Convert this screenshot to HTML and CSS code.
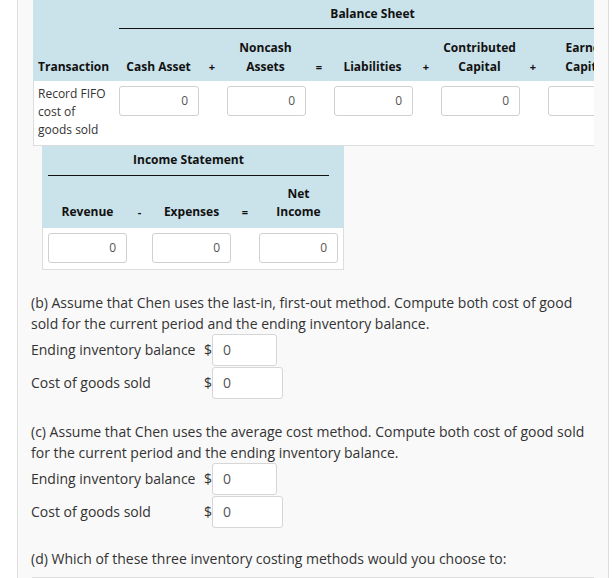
FILE: index.html
```html
<!DOCTYPE html>
<html>
<head>
<meta charset="utf-8">
<link rel="stylesheet" href="styles.css">
</head>
<body>
<div class="page">
  <div class="panel">
    <div class="bs-wrap">
      <div class="bs-grid">
        <div class="h-title bs-title">Balance Sheet</div>
        <div class="h-col txn">Transaction</div>
        <div class="h-col">Cash Asset</div>
        <div class="h-col op">+</div>
        <div class="h-col">Noncash<br>Assets</div>
        <div class="h-col op">=</div>
        <div class="h-col">Liabilities</div>
        <div class="h-col op">+</div>
        <div class="h-col">Contributed<br>Capital</div>
        <div class="h-col op">+</div>
        <div class="h-col">Earned<br>Capital</div>
        <div class="b-row">
          <div class="txn-label">Record FIFO cost of goods sold</div>
          <div class="num">0</div>
          <div></div>
          <div class="num">0</div>
          <div></div>
          <div class="num">0</div>
          <div></div>
          <div class="num">0</div>
          <div></div>
          <div class="num"></div>
        </div>
      </div>
    </div>

    <div class="is-wrap">
      <div class="is-head">
        <div class="is-title">Income Statement</div>
        <div class="is-cols">
          <div class="h-col">Revenue</div>
          <div class="h-col op">-</div>
          <div class="h-col">Expenses</div>
          <div class="h-col op">=</div>
          <div class="h-col">Net<br>Income</div>
        </div>
      </div>
      <div class="is-row">
        <div class="num">0</div>
        <div></div>
        <div class="num">0</div>
        <div></div>
        <div class="num">0</div>
      </div>
    </div>

    <p class="q q-b">(b) Assume that Chen uses the last-in, first-out method. Compute both cost of good sold for the current period and the ending inventory balance.</p>
    <div class="form">
      <div class="f-label">Ending inventory balance</div>
      <div class="f-dollar">$</div>
      <div class="f-input w65">0</div>
      <div class="f-label">Cost of goods sold</div>
      <div class="f-dollar">$</div>
      <div class="f-input w71">0</div>
    </div>

    <p class="q q-c">(c) Assume that Chen uses the average cost method. Compute both cost of good sold for the current period and the ending inventory balance.</p>
    <div class="form">
      <div class="f-label">Ending inventory balance</div>
      <div class="f-dollar">$</div>
      <div class="f-input w65">0</div>
      <div class="f-label">Cost of goods sold</div>
      <div class="f-dollar">$</div>
      <div class="f-input w71">0</div>
    </div>

    <p class="q q-d">(d) Which of these three inventory costing methods would you choose to:</p>
    <div class="next-box"></div>
  </div>
</div>
</body>
</html>
```

FILE: styles.css
```css
html, body {
  margin: 0;
  padding: 0;
  background: #ffffff;
}

body {
  font-family: "Open Sans", "Liberation Sans", sans-serif;
  color: #333333;
  width: 612px;
  height: 578px;
  overflow: hidden;
}

.page {
  display: flex;
  padding-left: 17px;
  height: 578px;
}

.panel {
  width: 563px;
  padding: 0 14px 0 13px;
  background: #f9f9f9;
  border-left: 1px solid #dddddd;
  border-right: 1px solid #dddddd;
  height: 600px;
}

/* Balance sheet */
.bs-wrap {
  margin-left: 2px;
  width: 561px;
  overflow: hidden;
}

.bs-grid {
  display: grid;
  grid-template-columns: 86px 79px 28px 79px 28px 79px 28px 79px 28px 79px;
  width: 593px;
  background: #cae2ea;
}

.h-title {
  font-size: 12px;
  font-weight: 700;
  color: #111111;
  text-align: center;
}

.bs-title {
  grid-column: 2 / 11;
  height: 28px;
  line-height: 27px;
  border-bottom: 1px solid #111111;
}

.h-col {
  font-size: 12px;
  font-weight: 700;
  color: #111111;
  text-align: center;
  line-height: 19px;
  height: 52px;
  box-sizing: border-box;
  padding-bottom: 5px;
  display: flex;
  align-items: flex-end;
  justify-content: center;
}

.h-col.txn {
  justify-content: flex-start;
  padding-left: 5px;
}

.h-col.op {
  font-size: 11px;
}

.b-row {
  grid-column: 1 / 11;
  display: grid;
  grid-template-columns: 86px 79px 28px 79px 28px 79px 28px 79px 28px 79px;
  background: #ffffff;
  border-left: 1px solid #dddddd;
  border-bottom: 1px solid #dddddd;
  height: 64px;
}

.b-row .txn-label {
  font-size: 12px;
  line-height: 18px;
  padding: 4px 12px 0 4px;
  color: #333333;
}

.num {
  height: 30px;
  box-sizing: border-box;
  margin-top: 5px;
  background: #ffffff;
  border: 1px solid #d0d0d0;
  border-radius: 3px;
  font-size: 12px;
  line-height: 28px;
  text-align: right;
  padding-right: 10px;
  color: #555555;
}

.b-row .num:nth-child(2) {
  margin-left: -1px;
}

/* Income statement */
.is-wrap {
  margin-left: 11px;
  width: 302px;
}

.is-head {
  background: #cae2ea;
  padding: 0 6px;
}

.is-title {
  font-size: 12px;
  font-weight: 700;
  color: #111111;
  text-align: center;
  width: 281px;
  height: 29px;
  line-height: 28px;
  border-bottom: 1px solid #111111;
}

.is-cols {
  display: grid;
  grid-template-columns: 79px 25px 79px 28px 79px;
}

.is-cols .h-col {
  height: 52px;
  padding-bottom: 7px;
  line-height: 18px;
}

.is-row {
  display: grid;
  grid-template-columns: 79px 25px 79px 28px 79px;
  background: #ffffff;
  border: 1px solid #dddddd;
  border-top: none;
  padding: 0 5px 6px 5px;
}

/* Questions */
.q {
  font-size: 14px;
  line-height: 21px;
  margin: 0;
  color: #333333;
}

.q-b {
  margin-top: 22px;
}

.q-c {
  margin-top: 22px;
}

.q-d {
  margin-top: 20px;
}

.form {
  display: grid;
  grid-template-columns: 173px 8px max-content;
  row-gap: 1px;
  align-items: center;
  font-size: 14px;
  color: #333333;
}

.f-label,
.f-dollar {
  line-height: 20px;
}

.f-input {
  height: 32px;
  box-sizing: border-box;
  background: #ffffff;
  border: 1px solid #d6d6d6;
  border-radius: 3px;
  padding-left: 10px;
  line-height: 30px;
  color: #555555;
}

.w65 { width: 65px; }
.w71 { width: 71px; }

.next-box {
  margin-top: 8px;
  margin-left: 1px;
  border-top: 1px solid #dddddd;
  height: 20px;
}
```
